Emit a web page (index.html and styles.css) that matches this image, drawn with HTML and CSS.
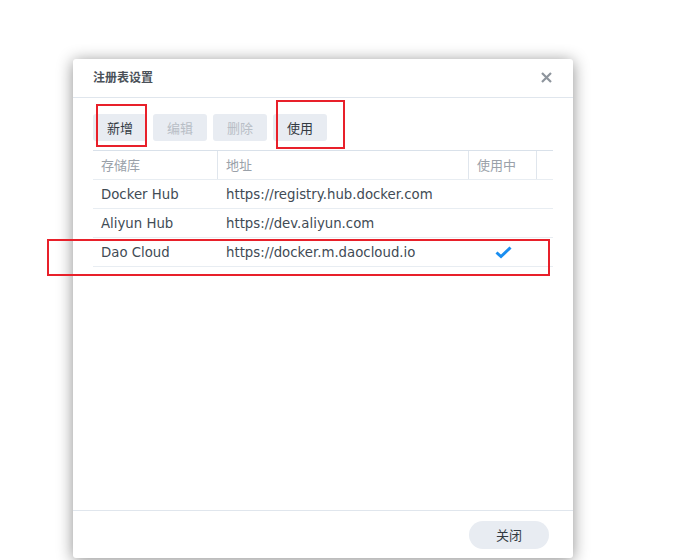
FILE: index.html
```html
<html>
<head>
	<meta http-equiv="content-type" content="text/html;charset=utf-8">
	<title>注册表设置</title>
	<link rel="stylesheet" href="styles.css">
</head>
<body>
	<div class="dialog">
		<div class="dlg-head">
			<span class="dlg-title">注册表设置</span>
			<span class="dlg-close">
				<svg width="11" height="11" viewBox="0 0 11 11"><path d="M1 1L10 10M10 1L1 10" stroke="#8e959d" stroke-width="2.2" fill="none"/></svg>
			</span>
		</div>

		<div class="dlg-body">
			<div class="toolbar">
				<span class="btn">新增</span>
				<span class="btn disabled">编辑</span>
				<span class="btn disabled">删除</span>
				<span class="btn">使用</span>
			</div>

			<div class="grid">
				<div class="row head">
					<div class="cell c1">存储库</div>
					<div class="cell c2">地址</div>
					<div class="cell c3">使用中</div>
					<div class="cell c4"></div>
				</div>
				<div class="row">
					<div class="cell c1">Docker Hub</div>
					<div class="cell c2">https://registry.hub.docker.com</div>
					<div class="cell c3"></div>
					<div class="cell c4"></div>
				</div>
				<div class="row">
					<div class="cell c1">Aliyun Hub</div>
					<div class="cell c2">https://dev.aliyun.com</div>
					<div class="cell c3"></div>
					<div class="cell c4"></div>
				</div>
				<div class="row">
					<div class="cell c1">Dao Cloud</div>
					<div class="cell c2">https://docker.m.daocloud.io</div>
					<div class="cell c3 mark">
						<svg width="17" height="13" viewBox="0 0 17 13"><path d="M1.5 6.5L6 10.5L15.5 1.5" stroke="#1a8ef0" stroke-width="3" fill="none"/></svg>
					</div>
					<div class="cell c4"></div>
				</div>
			</div>
		</div>

		<div class="dlg-foot">
			<span class="btn round">关闭</span>
		</div>
	</div>

	<!-- 标注框 -->
	<div class="note n1"></div>
	<div class="note n2"></div>
	<div class="note n3"></div>
</body>
</html>
```

FILE: styles.css
```css
body{
	background:#fff;
	padding:0;
	margin:0;
	font-family:"DejaVu Sans", Verdana, "Noto Sans CJK SC", sans-serif;
	color:#414b55;
}

.dialog{
	width:500px;
	height:499px;
	margin:59px 0 0 73px;
	background:#fff;
	border-radius:3px;
	box-shadow:0 2px 16px rgba(0,0,0,0.45);
	display:flex;
	flex-direction:column;
}

.dlg-head{
	height:35px;
	padding:0 21px 3px 20px;
	border-bottom:1px solid #e0e6ed;
	display:flex;
	align-items:center;
	justify-content:space-between;
}
.dlg-title{
	font-size:12px;
	font-weight:700;
	color:#4b5159;
	font-family:"Noto Sans CJK SC", sans-serif;
}
.dlg-close{
	display:flex;
	margin-top:2px;
}

.dlg-body{
	flex:1;
	padding:16px 20px 0 20px;
}

.toolbar{
	display:flex;
	gap:6px;
	margin-bottom:9px;
}
.btn{
	width:54px;
	height:27px;
	line-height:27px;
	text-align:center;
	background:#e8ecf2;
	border-radius:3px;
	font-size:13px;
	color:#333a42;
	font-family:"Noto Sans CJK SC", sans-serif;
}
.btn.disabled{
	color:#b8bec6;
}

.grid{
	border-top:1px solid #d9e1ea;
}
.row{
	display:flex;
	height:28px;
	border-bottom:1px solid #e8edf2;
	font-size:13.3px;
}
.cell{
	padding-left:8px;
	line-height:30px;
	box-sizing:border-box;
	white-space:nowrap;
}
.c1{ width:124px; }
.c2{ width:251px; padding-left:9px; }
.c3{ width:68px; }
.c4{ width:17px; }

.row.head{
	font-size:13px;
	color:#9aa1a9;
	font-family:"Noto Sans CJK SC", sans-serif;
}
.row.head .cell{
	line-height:28px;
}
.row.head .c2,
.row.head .c3,
.row.head .c4{
	border-left:1px solid #e0e6ed;
}
.row.head .c2{ padding-left:8px; }

.mark{
	display:flex;
	align-items:center;
	justify-content:center;
	padding-left:0;
	padding-right:0;
}
.mark svg{
	margin-left:3px;
}

.dlg-foot{
	height:47px;
	border-top:1px solid #e0e6ed;
	display:flex;
	align-items:center;
	justify-content:flex-end;
	padding-right:24px;
}
.btn.round{
	width:80px;
	height:28px;
	line-height:28px;
	border-radius:14px;
	margin-top:1px;
}

.note{
	position:absolute;
	border:2px solid #e8202a;
	box-sizing:border-box;
}
.n1{ left:96px; top:104px; width:51px; height:43px; }
.n2{ left:276px; top:100px; width:69px; height:49px; }
.n3{ left:47px; top:239px; width:503px; height:37px; }
```
